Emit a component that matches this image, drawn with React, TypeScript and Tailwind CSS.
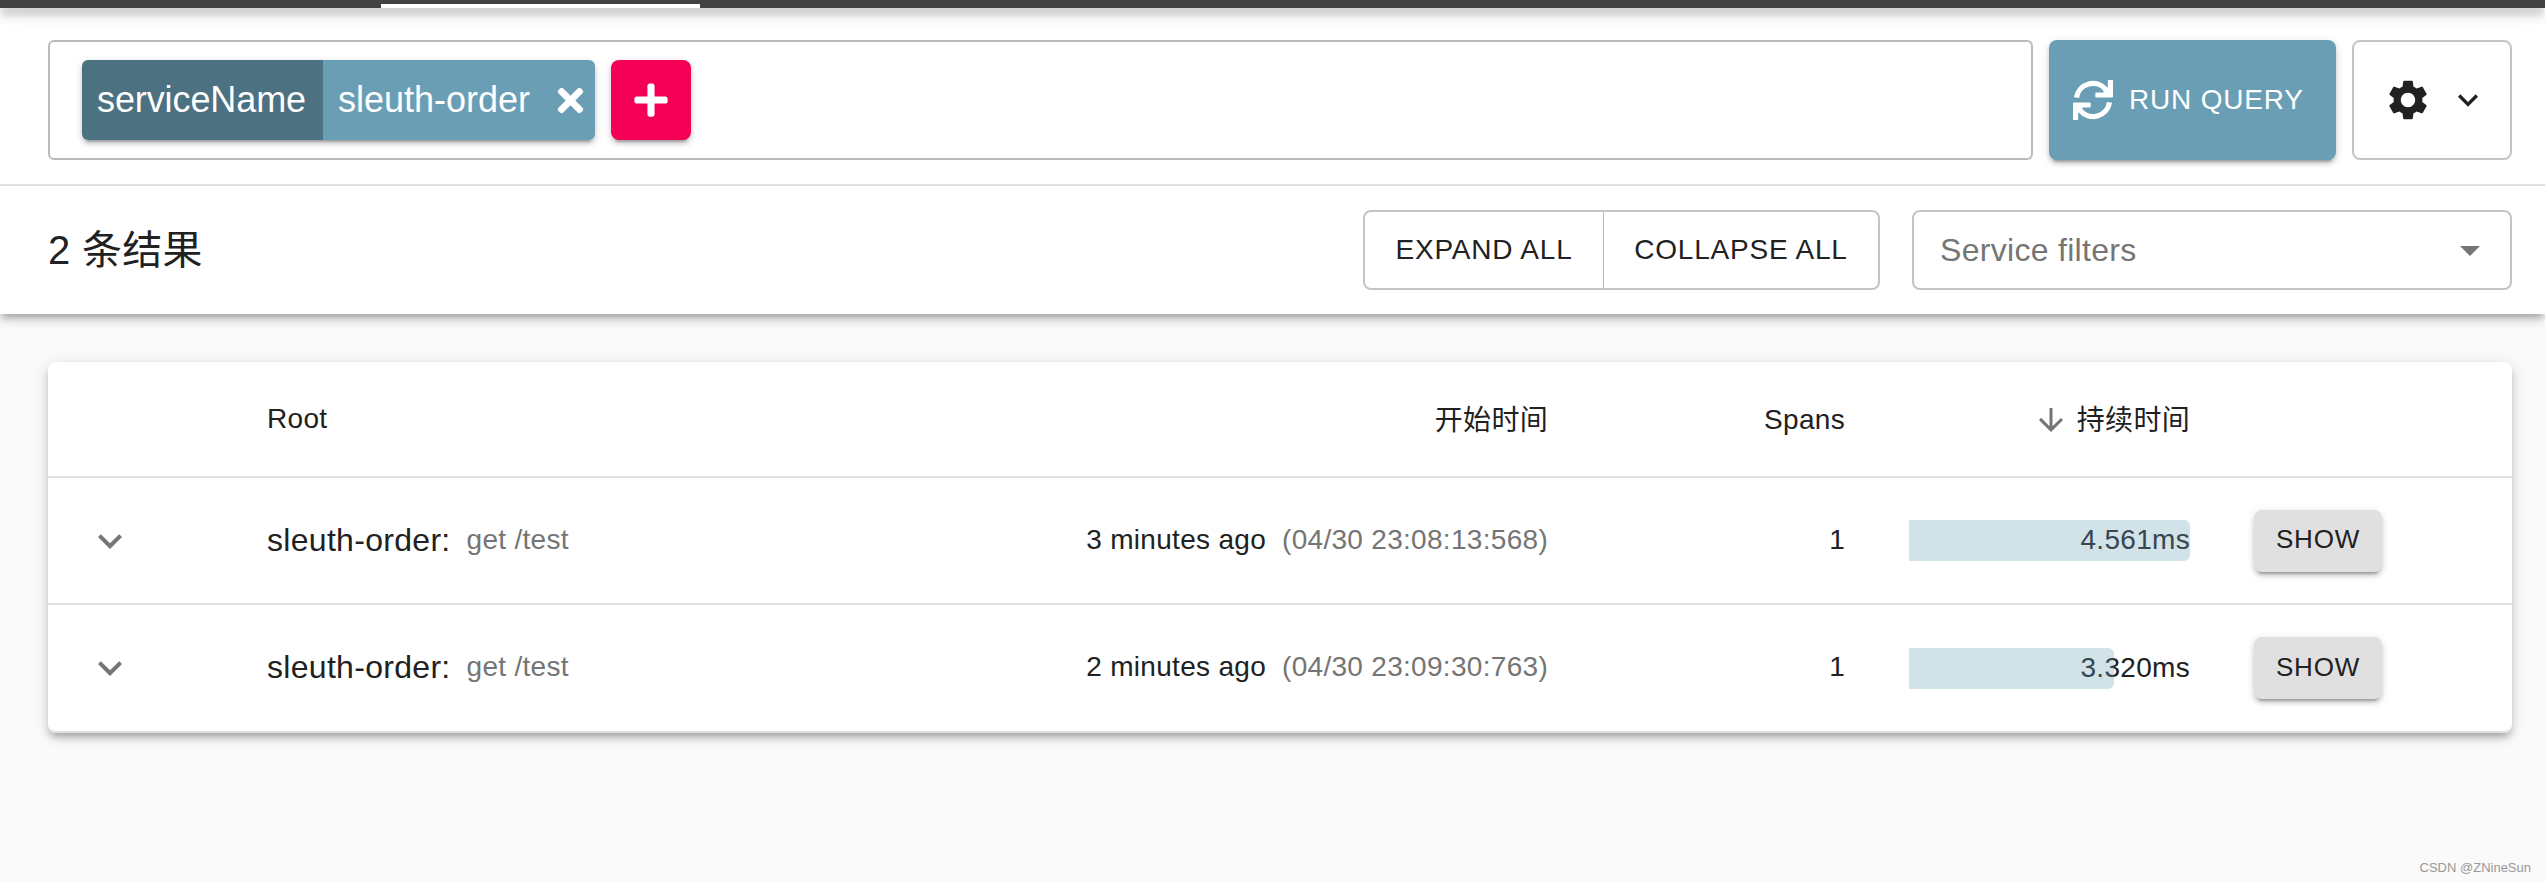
import React from "react";
import { FaPlus, FaTimes } from "react-icons/fa";
import {
  MdArrowDownward,
  MdArrowDropDown,
  MdExpandMore,
  MdSettings,
} from "react-icons/md";

type Trace = {
  serviceName: string;
  spanName: string;
  startedAgo: string;
  startTime: string;
  spans: number;
  duration: number;
};

const traces: Trace[] = [
  {
    serviceName: "sleuth-order",
    spanName: "get /test",
    startedAgo: "3 minutes ago",
    startTime: "04/30 23:08:13:568",
    spans: 1,
    duration: 4.561,
  },
  {
    serviceName: "sleuth-order",
    spanName: "get /test",
    startedAgo: "2 minutes ago",
    startTime: "04/30 23:09:30:763",
    spans: 1,
    duration: 3.32,
  },
];

const maxDuration = Math.max(...traces.map((trace) => trace.duration));

const SyncIcon = ({ className }: { className?: string }) => {
  // one half of the icon, the other one is the same turned by 180 degrees
  const half = (
    <>
      <path
        d="M3.5 17.6A16.6 16.6 0 0 1 33 9.8"
        fill="none"
        stroke="currentColor"
        strokeWidth="5.2"
      />
      <path d="M35.6 0H39.2Q40 0 40 .8V16.8Q40 17.6 39.2 17.6H23.1Q22.3 17.6 22.3 16.8V13.4Q22.3 12.6 23.1 12.6H30L34.8 7V.8Q34.8 0 35.6 0Z" />
    </>
  );

  return (
    <svg className={className} viewBox="0 0 40 40" fill="currentColor">
      {half}
      <g transform="rotate(180 20 20)">{half}</g>
    </svg>
  );
};

const QueryBar = () => {
  return (
    <div className="flex h-[178px] items-center gap-4 border-b-2 border-[#e0e0e0] pt-2 pr-[33px] pl-12">
      <div className="flex h-[120px] grow items-center gap-4 rounded-[6px] border-2 border-[#bbbbbb] bg-white px-8">
        {/* Criterion chip */}
        <div className="flex h-20 rounded-[6px] text-[36px] text-white shadow-[0_6px_2px_-4px_rgba(0,0,0,0.2),0_4px_4px_0_rgba(0,0,0,0.14),0_2px_10px_0_rgba(0,0,0,0.12)]">
          <div className="flex w-[241px] items-center rounded-l-[6px] bg-[#4c7180] pl-[15px] tracking-[-0.1px]">
            serviceName
          </div>
          <div className="flex w-[272px] items-center rounded-r-[6px] bg-[#6a9eb5] pl-[15px]">
            sleuth-order
            <FaTimes className="ml-[22px] size-[37px] shrink-0" />
          </div>
        </div>
        <button className="flex size-20 items-center justify-center rounded-[8px] bg-[#f50057] text-white shadow-[0_6px_2px_-4px_rgba(0,0,0,0.2),0_4px_4px_0_rgba(0,0,0,0.14),0_2px_10px_0_rgba(0,0,0,0.12)]">
          <FaPlus className="size-[38px]" />
        </button>
      </div>

      <button className="flex h-[120px] w-[287px] items-center rounded-[8px] bg-[#6a9eb5] pl-6 text-[28px] tracking-[0.02857em] text-white shadow-[0_6px_2px_-4px_rgba(0,0,0,0.2),0_4px_4px_0_rgba(0,0,0,0.14),0_2px_10px_0_rgba(0,0,0,0.12)]">
        <SyncIcon className="mr-4 size-10" />
        RUN QUERY
      </button>

      <button className="flex h-[120px] w-40 items-center justify-center gap-4 rounded-[8px] border-2 border-[#c4c4c4] pl-2 text-[#212121]">
        <MdSettings className="size-12" />
        <MdExpandMore className="size-10" />
      </button>
    </div>
  );
};

const ResultBar = () => {
  return (
    <div className="flex h-32 items-center pr-[33px] pl-12">
      <h6 className="grow text-[40px] tracking-[0.0075em]">2 条结果</h6>
      <div className="mr-8 flex h-20 w-[517px] rounded-[8px] border-2 border-[#c4c4c4] text-[28px] tracking-[0.02857em]">
        <button className="w-[239px] border-r border-[#bbbbbb]">
          EXPAND ALL
        </button>
        <button className="grow">COLLAPSE ALL</button>
      </div>
      <div className="flex h-20 w-[600px] items-center justify-between rounded-[8px] border-2 border-[#c4c4c4] pr-4 pl-[26px] text-[32px] tracking-[0.00938em] text-[#757575]">
        Service filters
        <MdArrowDropDown className="size-12" />
      </div>
    </div>
  );
};

const TraceTable = () => {
  return (
    <div className="rounded-[8px] bg-white text-[28px] tracking-[0.01071em] shadow-[0_6px_6px_-4px_rgba(0,0,0,0.2),0_6px_8px_0_rgba(0,0,0,0.14),0_2px_16px_0_rgba(0,0,0,0.12)]">
      {/* Header */}
      <div className="grid h-[116px] grid-cols-[187px_765px_580px_297px_345px_290px] items-center border-b-2 border-[#e0e0e0]">
        <div />
        <div className="px-8">Root</div>
        <div className="px-8 pt-[3px] text-right">开始时间</div>
        <div className="px-8 pt-px text-right">Spans</div>
        <div className="flex items-center justify-end px-8">
          <MdArrowDownward className="mt-px mr-2 size-9 text-[#757575]" />
          <span className="pt-[3px]">持续时间</span>
        </div>
        <div />
      </div>

      {/* Rows */}
      {traces.map((trace) => (
        <div
          key={trace.startTime}
          className="grid h-[127px] grid-cols-[187px_765px_580px_297px_345px_290px] items-center border-b-2 border-[#e0e0e0] last:h-32 last:rounded-b-[8px]"
        >
          <MdExpandMore className="ml-[38px] size-12 text-[#757575]" />
          <div className="flex items-center px-8 pb-0.5">
            <span className="text-[32px] tracking-[0.00938em]">
              {trace.serviceName}:
            </span>
            <span className="ml-4 text-[#757575]">{trace.spanName}</span>
          </div>
          <div className="flex justify-end px-8 pb-0.5">
            {trace.startedAgo}
            <span className="ml-4 text-[#757575]">({trace.startTime})</span>
          </div>
          <div className="px-8 pb-0.5 text-right">{trace.spans}</div>
          <div className="px-8">
            <div className="relative pb-0.5 text-right leading-[39px]">
              {trace.duration.toFixed(3)}ms
              {/* Duration bar, relative to the slowest trace */}
              <div
                className="absolute inset-y-0 left-0 rounded-r-[6px] bg-[#6a9eb5]/30"
                style={{ width: `${(trace.duration / maxDuration) * 100}%` }}
              />
            </div>
          </div>
          <div className="px-8">
            <button className="h-[62px] w-32 rounded-[8px] bg-[#e0e0e0] pb-0.5 text-[26px] tracking-[0.03077em] shadow-[0_6px_2px_-4px_rgba(0,0,0,0.2),0_4px_4px_0_rgba(0,0,0,0.14),0_2px_10px_0_rgba(0,0,0,0.12)]">
              SHOW
            </button>
          </div>
        </div>
      ))}
    </div>
  );
};

const App = () => {
  return (
    <div className="relative h-[881px] overflow-hidden bg-[#fafafa] font-['Liberation_Sans','Noto_Sans_CJK_SC',sans-serif] text-[#212121]">
      {/* App bar */}
      <div className="relative z-10 flex h-2 items-end bg-[#424242] pl-[381px] shadow-[0_4px_8px_-2px_rgba(0,0,0,0.2),0_8px_10px_0_rgba(0,0,0,0.14),0_2px_20px_0_rgba(0,0,0,0.12)]">
        <div className="h-1 w-[319px] bg-white" />
      </div>

      <div className="bg-white shadow-[0_6px_6px_-4px_rgba(0,0,0,0.2),0_6px_8px_0_rgba(0,0,0,0.14),0_2px_16px_0_rgba(0,0,0,0.12)]">
        <QueryBar />
        <ResultBar />
      </div>

      <div className="pt-12 pr-[33px] pl-12">
        <TraceTable />
      </div>

      <span className="absolute right-[14px] bottom-1 text-[13px] text-[#999999]">
        CSDN @ZNineSun
      </span>
    </div>
  );
};

export default App;
